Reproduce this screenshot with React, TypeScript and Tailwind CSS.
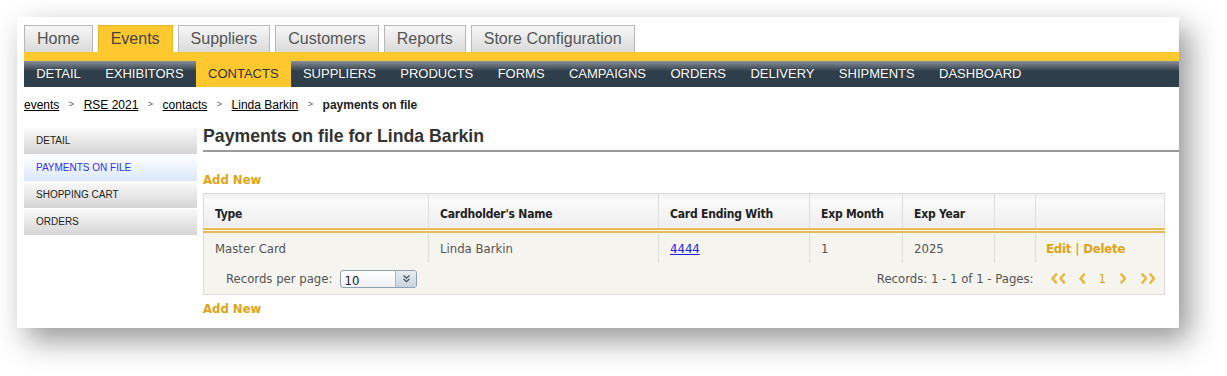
import React from "react";

const topTabs = ["Home", "Events", "Suppliers", "Customers", "Reports", "Store Configuration"];
const navItems = ["DETAIL", "EXHIBITORS", "CONTACTS", "SUPPLIERS", "PRODUCTS", "FORMS", "CAMPAIGNS", "ORDERS", "DELIVERY", "SHIPMENTS", "DASHBOARD"];
const sideItems = ["DETAIL", "PAYMENTS ON FILE", "SHOPPING CART", "ORDERS"];

const columns = [
  { label: "Type", w: "w-[225px]" },
  { label: "Cardholder's Name", w: "w-[230px]" },
  { label: "Card Ending With", w: "w-[151px]" },
  { label: "Exp Month", w: "w-[93px]" },
  { label: "Exp Year", w: "w-[92px]" },
  { label: "", w: "w-[41px]" },
  { label: "", w: "" },
];

function Chevron({ dir, double }: { dir: "left" | "right"; double?: boolean }) {
  const one = (x: number) =>
    dir === "left" ? `M${x + 5} 1.5 L${x + 1.5} 5.5 L${x + 5} 9.5` : `M${x + 1.5} 1.5 L${x + 5} 5.5 L${x + 1.5} 9.5`;
  return (
    <svg width={double ? 15 : 7} height="11" viewBox={`0 0 ${double ? 15 : 7} 11`}>
      <path d={one(0)} fill="none" stroke="#e6b640" strokeWidth="2.6" strokeLinecap="round" strokeLinejoin="round" />
      {double && <path d={one(8)} fill="none" stroke="#e6b640" strokeWidth="2.6" strokeLinecap="round" strokeLinejoin="round" />}
    </svg>
  );
}

export default function App() {
  return (
    <div className="min-h-[376px] bg-white pt-[17px] pl-[17px] font-['Liberation_Sans',Arial,sans-serif]">
      <div className="w-[1162px] h-[311px] bg-white shadow-[10px_12px_28px_rgba(0,0,0,0.42)] pt-[8px] pl-[7px]">
        {/* top tabs */}
        <div className="flex gap-[5px] h-[27px]">
          {topTabs.map((t) => (
            <div
              key={t}
              className={
                t === "Events"
                  ? "h-[27px] px-[12px] border border-[#e6b52a] border-b-0 bg-[#ffc82e] text-[16px] leading-[26px] text-[#444]"
                  : "h-[27px] px-[12px] border border-[#b8b8b8] border-b-0 bg-gradient-to-b from-[#f7f7f7] to-[#dadada] text-[16px] leading-[26px] text-[#555]"
              }
            >
              {t}
            </div>
          ))}
        </div>
        <div className="h-[9px] bg-[#ffc82e]" />
        {/* dark nav */}
        <div className="flex h-[26px] bg-gradient-to-b from-[#8a9096] via-[#2f3e4b] via-40% to-[#2f3e4b]">
          {navItems.map((n) => (
            <div
              key={n}
              className={
                n === "CONTACTS"
                  ? "px-[12.2px] bg-[#ffc82e] text-[13px] leading-[26px] text-[#333]"
                  : "px-[12.2px] text-[13px] leading-[26px] text-white [text-shadow:0_0_1px_#1a2530]"
              }
            >
              {n}
            </div>
          ))}
        </div>
        {/* breadcrumb */}
        <div className="flex items-center h-[34px] pt-[1px] text-[12px] text-black gap-[9.5px]">
          <span className="underline">events</span>
          <span className="text-[9px] text-[#555]">&gt;</span>
          <span className="underline">RSE 2021</span>
          <span className="text-[9px] text-[#555]">&gt;</span>
          <span className="underline">contacts</span>
          <span className="text-[9px] text-[#555]">&gt;</span>
          <span className="underline">Linda Barkin</span>
          <span className="text-[9px] text-[#555]">&gt;</span>
          <span className="text-[#222] font-bold">payments on file</span>
        </div>
        <div className="flex gap-[6px] pt-[6px]">
          {/* side nav */}
          <div className="w-[173px] flex flex-col gap-[1px] pt-[1px]">
            {sideItems.map((s) => (
              <div
                key={s}
                className={
                  s === "PAYMENTS ON FILE"
                    ? "h-[26px] pl-[12px] bg-gradient-to-b from-white to-[#d9e8fb] text-[10px] leading-[26px] text-[#3030f0]"
                    : "h-[26px] pl-[12px] bg-gradient-to-b from-[#fafafa] to-[#d5d5d5] text-[10px] leading-[26px] text-[#222]"
                }
              >
                {s}
              </div>
            ))}
          </div>
          {/* content */}
          <div className="flex-1 pt-[2px]">
            <div className="h-[23px] border-b-[2px] border-[#9a9a9a] text-[17.7px] font-bold leading-[14px] text-[#333]">
              Payments on file for Linda Barkin
            </div>
            <div className="w-[962px] font-['DejaVu_Sans_Condensed','DejaVu_Sans',sans-serif]">
              <div className="h-[41px] pt-[20px] text-[13px] font-bold text-[#e0a314] leading-[16px]">Add New</div>
              <table className="w-full border-collapse border border-[#dcdcdc] text-[13px] table-fixed">
                <thead>
                  <tr className="bg-gradient-to-b from-[#f0f0f0] via-[#fafafa] via-20% to-[#efefef] border-b-[5px] border-double border-[#e8bb58]">
                    {columns.map((c, i) => (
                      <th
                        key={i}
                        className={`${c.w} p-0 text-left font-bold text-[#222] text-[12px] tracking-[-0.2px] ${i < 6 ? "border-r border-[#dcdcdc]" : ""}`}
                      >
                        <div className="flex h-[34px] items-center pl-[11px] pt-[6px]">{c.label}</div>
                      </th>
                    ))}
                  </tr>
                </thead>
                <tbody className="bg-[#f5f4ef] text-[#555]">
                  <tr>
                    <td className="p-0 border-r border-[#dcdcdc]">
                      <div className="flex h-[30px] items-center pl-[11px] pt-[2px]">Master Card</div>
                    </td>
                    <td className="p-0 border-r border-[#dcdcdc]">
                      <div className="flex h-[30px] items-center pl-[11px] pt-[2px]">Linda Barkin</div>
                    </td>
                    <td className="p-0 border-r border-[#dcdcdc]">
                      <div className="flex h-[30px] items-center pl-[11px] pt-[2px]">
                        <span className="text-[#2222ee] underline">4444</span>
                      </div>
                    </td>
                    <td className="p-0 border-r border-[#dcdcdc]">
                      <div className="flex h-[30px] items-center pl-[11px] pt-[2px]">1</div>
                    </td>
                    <td className="p-0 border-r border-[#dcdcdc]">
                      <div className="flex h-[30px] items-center pl-[11px] pt-[2px]">2025</div>
                    </td>
                    <td className="p-0 border-r border-[#dcdcdc]"></td>
                    <td className="p-0">
                      <div className="flex h-[30px] items-center pl-[10px] pt-[2px] font-bold text-[#e0a314] tracking-[-0.2px]">
                        Edit<span className="mx-[4px]">|</span>Delete
                      </div>
                    </td>
                  </tr>
                  <tr>
                    <td colSpan={7} className="p-0">
                      <div className="flex h-[31px] items-center justify-between pl-[22px] pr-[8px]">
                        <div className="flex items-center gap-[8px]">
                          <span>Records per page:</span>
                          <div className="flex h-[18px] w-[77px] rounded-[3px] border border-[#8ea0b4] bg-gradient-to-b from-white to-[#eef0f3]">
                            <span className="flex-1 pl-[3px] pt-[1px] text-[13px] leading-[17px] text-[#222]">10</span>
                            <div className="flex w-[21px] items-center justify-center rounded-r-[2px] border-l border-[#a8b6c6] bg-gradient-to-b from-[#e8edf3] to-[#c8d2de]">
                              <svg width="9" height="9" viewBox="0 0 9 9">
                                <path d="M1.5 1.5 L4.5 4 L7.5 1.5 M1.5 5 L4.5 7.5 L7.5 5" fill="none" stroke="#4d5b6b" strokeWidth="1.4" />
                              </svg>
                            </div>
                          </div>
                        </div>
                        <div className="flex items-center">
                          <span className="mr-[17px]">Records: 1 - 1 of 1 - Pages:</span>
                          <Chevron dir="left" double />
                          <span className="ml-[13px]"><Chevron dir="left" /></span>
                          <span className="ml-[13px] mr-[14px] text-[#e0a314]">1</span>
                          <Chevron dir="right" />
                          <span className="ml-[14px]"><Chevron dir="right" double /></span>
                        </div>
                      </div>
                    </td>
                  </tr>
                </tbody>
              </table>
              <div className="pt-[6px] text-[13px] font-bold text-[#e0a314] leading-[16px]">Add New</div>
            </div>
          </div>
        </div>
      </div>
    </div>
  );
}
